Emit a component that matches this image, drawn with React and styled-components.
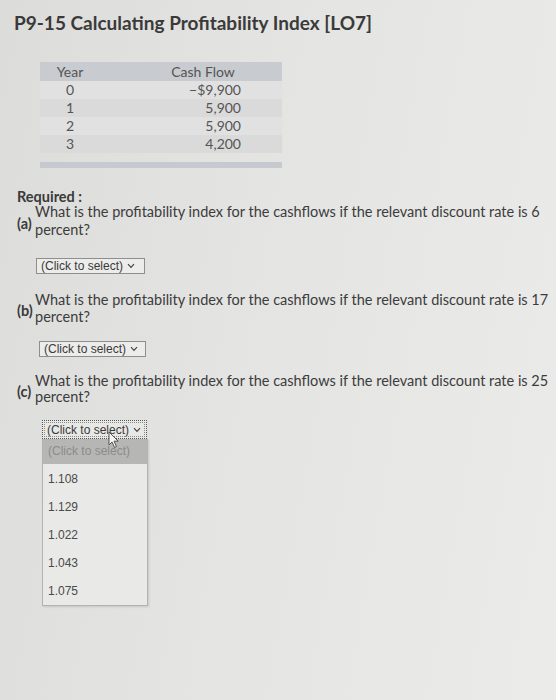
import React from 'react';
import styled, { createGlobalStyle } from 'styled-components';

const GlobalStyle = createGlobalStyle`
  html, body {
    margin: 0;
    padding: 0;
  }
  body {
    background: linear-gradient(100deg, #dcdcda 0%, #e4e4e2 45%, #ebebea 100%);
    min-height: 700px;
    font-family: Lato, "Open Sans", sans-serif;
    color: #3c3c3c;
  }
`;

const Page = styled.div`
  padding: 12px 0 0 14px;
  width: 542px;
  height: 688px;
  overflow: hidden;
`;

const Title = styled.h1`
  margin: 0;
  font-size: 19px;
  line-height: 21px;
  font-weight: 700;
  color: #3a3a3a;
`;

const DataTable = styled.table`
  margin: 29px 0 0 26px;
  border-collapse: collapse;
  width: 242px;
  font-size: 14px;
  color: #555;
`;

const HeadCell = styled.th`
  background: #c8cbcf;
  font-weight: 400;
  height: 19px;
  padding: 0;
  text-align: center;
  padding-left: ${p => p.$shift || 0}px;
`;

const Row = styled.tr`
  background: ${p => (p.$alt ? '#d9dad9' : '#e0e1e0')};
`;

const Cell = styled.td`
  height: 18px;
  line-height: 18px;
  padding: 0;
  text-align: ${p => (p.$right ? 'right' : 'center')};
  padding-right: ${p => (p.$right ? 41 : 0)}px;
  width: ${p => (p.$right ? 'auto' : '60px')};
`;

const Spacer = styled.tr`
  height: 9px;
`;

const FootBar = styled.td`
  background: #c6c9cd;
  height: 6px;
  padding: 0;
`;

const Required = styled.div`
  margin: 22px 0 0 3px;
  font-size: 14.5px;
  font-weight: 700;
  line-height: 14px;
  color: #3a3a3a;
`;

const Question = styled.div`
  display: flex;
  align-items: center;
  margin: ${p => p.$top}px 0 0 3px;
`;

const Label = styled.span`
  width: 18px;
  font-size: 14.5px;
  font-weight: 700;
  color: #3a3a3a;
  position: relative;
  top: 2px;
`;

const Text = styled.div`
  font-size: 14.5px;
  line-height: ${p => p.$lh || 18}px;
  color: #3c3c3c;
  width: 520px;
  white-space: nowrap;
`;

const SelectBox = styled.div`
  margin: ${p => p.$top}px 0 0 ${p => p.$left}px;
  width: ${p => p.$w}px;
  height: 14px;
  box-sizing: content-box;
  border: 1px solid #8e8e8e;
  background: #ececea;
  display: flex;
  align-items: center;
  padding: 0 0 0 4px;
  font-family: "Liberation Sans", Arial, sans-serif;
  font-size: 12px;
  color: #3a3a3a;
  gap: 4px;
`;

const OpenWrap = styled.div`
  position: relative;
  margin: 15px 0 0 28px;
  width: 105px;
`;

const FocusBox = styled.div`
  height: 17px;
  border: 1px dotted #555;
  outline: 1px dotted #8a8a8a;
  outline-offset: -3px;
  background: #e8e8e6;
  display: flex;
  align-items: center;
  padding-left: 4px;
  gap: 4px;
  font-family: "Liberation Sans", Arial, sans-serif;
  font-size: 12px;
  color: #3a3a3a;
`;

const Menu = styled.div`
  position: absolute;
  left: 0;
  top: 19px;
  width: 104px;
  border: 1px solid #b3b3b3;
  border-top: none;
  background: #e9e9e8;
  font-family: "Liberation Sans", Arial, sans-serif;
  font-size: 12px;
  box-shadow: 1px 1px 2px rgba(0, 0, 0, 0.12);
`;

const Option = styled.div`
  height: ${p => (p.$active ? 25 : 28)}px;
  line-height: ${p => (p.$active ? 25 : 28)}px;
  padding-left: 5px;
  background: ${p => (p.$active ? '#b6b6b5' : 'transparent')};
  color: ${p => (p.$active ? '#8c8c8c' : '#4a4a4a')};
  margin-bottom: ${p => (p.$active ? 1 : 0)}px;
`;

const Cursor = styled.svg`
  position: absolute;
  left: 66px;
  top: 11px;
`;

const Chevron = () => (
  <svg width="8" height="6" viewBox="0 0 8 6">
    <path d="M1 1.2 L4 4.4 L7 1.2" fill="none" stroke="#444" strokeWidth="1.2" />
  </svg>
);

const rows = [
  ['0', '\u2212$9,900'],
  ['1', '5,900'],
  ['2', '5,900'],
  ['3', '4,200'],
];

const options = ['1.108', '1.129', '1.022', '1.043', '1.075'];

export default function App() {
  return (
    <>
      <GlobalStyle />
      <Page>
        <Title>P9-15 Calculating Profitability Index [LO7]</Title>

        <DataTable>
          <thead>
            <tr>
              <HeadCell>Year</HeadCell>
              <HeadCell $shift={24}>Cash Flow</HeadCell>
            </tr>
          </thead>
          <tbody>
            {rows.map(([year, flow], i) => (
              <Row key={year} $alt={i % 2 === 1}>
                <Cell>{year}</Cell>
                <Cell $right>{flow}</Cell>
              </Row>
            ))}
            <Spacer />
            <tr>
              <FootBar colSpan={2} />
            </tr>
          </tbody>
        </DataTable>

        <Required>Required :</Required>

        <Question $top={-1}>
          <Label>(a)</Label>
          <Text>
            What is the profitability index for the cashflows if the relevant discount rate is 6
            <br />
            percent?
          </Text>
        </Question>
        <SelectBox $top={19} $left={22} $w={103}>
          (Click to select) <Chevron />
        </SelectBox>

        <Question $top={17}>
          <Label>(b)</Label>
          <Text $lh={17}>
            What is the profitability index for the cashflows if the relevant discount rate is 17
            <br />
            percent?
          </Text>
        </Question>
        <SelectBox $top={16} $left={25} $w={101}>
          (Click to select) <Chevron />
        </SelectBox>

        <Question $top={16}>
          <Label>(c)</Label>
          <Text $lh={16}>
            What is the profitability index for the cashflows if the relevant discount rate is 25
            <br />
            percent?
          </Text>
        </Question>

        <OpenWrap>
          <FocusBox>
            (Click to select) <Chevron />
          </FocusBox>
          <Menu>
            <Option $active>(Click to select)</Option>
            {options.map(o => (
              <Option key={o}>{o}</Option>
            ))}
          </Menu>
          <Cursor width="12" height="18" viewBox="0 0 12 18">
            <path
              d="M1 1 L1 14 L4 11 L6.5 16.5 L8.5 15.6 L6 10.2 L10.2 10.2 Z"
              fill="#f4f4f4"
              stroke="#555"
              strokeWidth="1"
              strokeLinejoin="round"
            />
          </Cursor>
        </OpenWrap>
      </Page>
    </>
  );
}
